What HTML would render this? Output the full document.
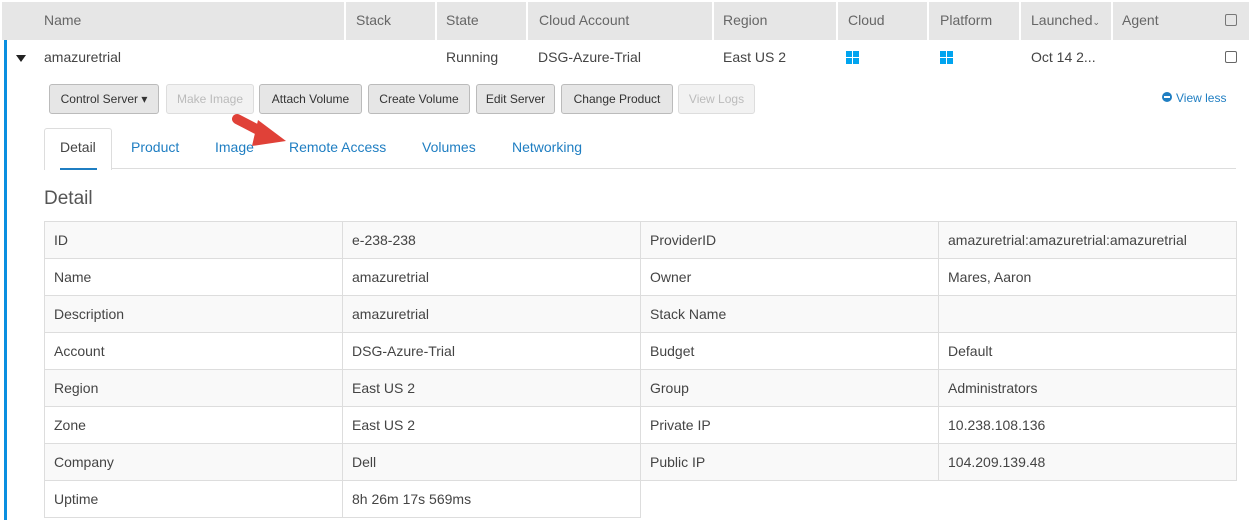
<!DOCTYPE html><html><head><style>
*{margin:0;padding:0;box-sizing:border-box}
body{width:1251px;height:520px;overflow:hidden;background:#fff;font-family:"Liberation Sans",sans-serif;color:#444;font-size:14px;position:relative}
.a{position:absolute;white-space:nowrap}
.hd{position:absolute;left:2px;top:2px;width:1247px;height:38px;background:#e6e6e6}
.hd div{position:absolute;top:0;height:36px;line-height:36px;color:#666;font-size:14px}
.dv{width:2px;background:#fff;height:38px!important}
.btn{position:absolute;top:84px;height:30px;line-height:28px;border:1px solid #bbb;border-radius:3px;background:#e6e6e6;font-size:12px;color:#333;text-align:center}
.btn.d{background:#f2f2f2;border-color:#ddd;color:#bbb}
.tab{position:absolute;top:139px;font-size:14px;color:#1f7ec2}
table{position:absolute;left:44px;top:221px;border-collapse:collapse;font-size:14px}
td{border:1px solid #ddd;height:37px;width:298px;padding-left:9px;padding-bottom:1px;color:#444}
tr:nth-child(odd) td{background:#f9f9f9}
.win{position:absolute;width:14px;height:14px}
.win i{position:absolute;width:6px;height:6px;background:#00a4ef}
</style></head><body>
<div class="hd">
<div style="left:42px">Name</div><div class="dv" style="left:342px"></div>
<div style="left:354px">Stack</div><div class="dv" style="left:433px"></div>
<div style="left:444px">State</div><div class="dv" style="left:524px"></div>
<div style="left:537px">Cloud Account</div><div class="dv" style="left:710px"></div>
<div style="left:721px">Region</div><div class="dv" style="left:834px"></div>
<div style="left:846px">Cloud</div><div class="dv" style="left:925px"></div>
<div style="left:938px">Platform</div><div class="dv" style="left:1017px"></div>
<div style="left:1029px">Launched<span style="font-size:9px">&#8964;</span></div><div class="dv" style="left:1109px"></div>
<div style="left:1120px">Agent</div>
<div style="left:1223px;top:12px;width:12px;height:12px;border:1px solid #777;border-radius:2px"></div>
</div>
<div class="a" style="left:4px;top:40px;width:3px;height:480px;background:#0b8fe0"></div>
<div class="a" style="left:16px;top:55px;width:0;height:0;border-left:5px solid transparent;border-right:5px solid transparent;border-top:7px solid #222"></div>
<div class="a" style="left:44px;top:49px">amazuretrial</div>
<div class="a" style="left:446px;top:49px">Running</div>
<div class="a" style="left:538px;top:49px">DSG-Azure-Trial</div>
<div class="a" style="left:723px;top:49px">East US 2</div>
<div class="win" style="left:846px;top:51px"><i style="left:0;top:0"></i><i style="left:7px;top:0"></i><i style="left:0;top:7px"></i><i style="left:7px;top:7px"></i></div>
<div class="win" style="left:940px;top:51px"><i style="left:0;top:0"></i><i style="left:7px;top:0"></i><i style="left:0;top:7px"></i><i style="left:7px;top:7px"></i></div>
<div class="a" style="left:1031px;top:49px">Oct 14 2...</div>
<div class="a" style="left:1225px;top:51px;width:12px;height:12px;border:1px solid #666;border-radius:2px"></div>
<div class="btn" style="left:49px;width:110px">Control Server &#9662;</div>
<div class="btn d" style="left:166px;width:88px">Make Image</div>
<div class="btn" style="left:259px;width:103px">Attach Volume</div>
<div class="btn" style="left:368px;width:102px">Create Volume</div>
<div class="btn" style="left:476px;width:79px">Edit Server</div>
<div class="btn" style="left:561px;width:112px">Change Product</div>
<div class="btn d" style="left:678px;width:77px">View Logs</div>
<div class="a" style="left:1162px;top:92px;width:10px;height:10px;border-radius:50%;background:#1f7ec2"></div>
<div class="a" style="left:1164px;top:96px;width:6px;height:2px;background:#fff"></div>
<div class="a" style="left:1176px;top:91px;font-size:12px;color:#1f7ec2">View less</div>
<div class="a" style="left:44px;top:168px;width:1192px;height:1px;background:#ddd"></div>
<div class="a" style="left:44px;top:128px;width:68px;height:42px;border:1px solid #ddd;border-bottom:none;background:#fff;border-radius:3px 3px 0 0"></div>
<div class="a" style="left:60px;top:168px;width:37px;height:2px;background:#1f7ec2"></div>
<div class="tab" style="left:60px;color:#444">Detail</div>
<div class="tab" style="left:131px">Product</div>
<div class="tab" style="left:215px">Image</div>
<div class="tab" style="left:289px">Remote Access</div>
<div class="tab" style="left:422px">Volumes</div>
<div class="tab" style="left:512px">Networking</div>
<svg class="a" style="left:228px;top:110px" width="62" height="40"><line x1="9" y1="9" x2="38" y2="24" stroke="#e04138" stroke-width="10" stroke-linecap="round"/><polygon points="30,10 58,31 24,36" fill="#e04138"/></svg>
<div class="a" style="left:44px;top:188px;font-size:19px;color:#555">Detail</div>
<table>
<tr><td>ID</td><td>e-238-238</td><td>ProviderID</td><td>amazuretrial:amazuretrial:amazuretrial</td></tr>
<tr><td>Name</td><td>amazuretrial</td><td>Owner</td><td>Mares, Aaron</td></tr>
<tr><td>Description</td><td>amazuretrial</td><td>Stack Name</td><td></td></tr>
<tr><td>Account</td><td>DSG-Azure-Trial</td><td>Budget</td><td>Default</td></tr>
<tr><td>Region</td><td>East US 2</td><td>Group</td><td>Administrators</td></tr>
<tr><td>Zone</td><td>East US 2</td><td>Private IP</td><td>10.238.108.136</td></tr>
<tr><td>Company</td><td>Dell</td><td>Public IP</td><td>104.209.139.48</td></tr>
<tr><td>Uptime</td><td>8h 26m 17s 569ms</td><td style="border:none;background:#fff"></td><td style="border:none;background:#fff"></td></tr>
</table>
</body></html>
